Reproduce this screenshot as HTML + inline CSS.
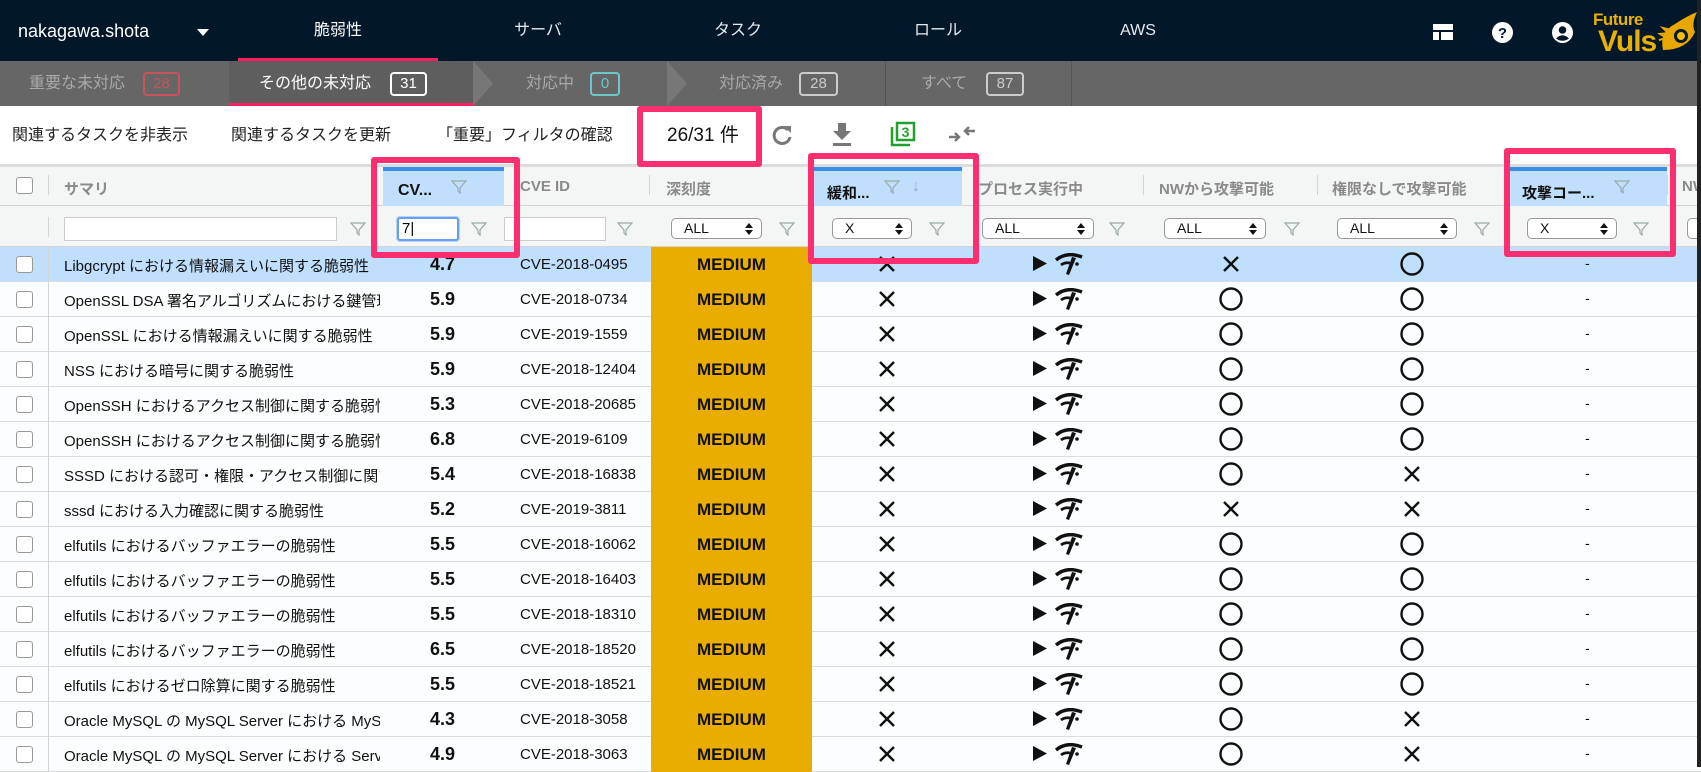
<!DOCTYPE html>
<html><head><meta charset="utf-8">
<style>
*{box-sizing:border-box;margin:0;padding:0}
body{width:1701px;height:767px;overflow:hidden;background:#fff;font-family:"Liberation Sans","Noto Sans CJK JP",sans-serif;position:relative}
.a{position:absolute}
.nav{left:0;top:0;width:1701px;height:61px;background:#03172a}
.nv{top:0;height:61px;line-height:61px;color:#e6e9ee;font-size:16px;width:200px;text-align:center}
.tabs{left:0;top:61px;width:1701px;height:45px;background:#666}
.tt{top:61px;height:45px;line-height:45px;font-size:16px;color:#a9a9a9;white-space:nowrap}
.bd{top:72px;height:24px;border:2px solid #ccc;border-radius:4px;font-size:15px;line-height:20px;text-align:center;color:#ccc}
.tb{top:121px;font-size:16px;color:#222;white-space:nowrap}
.hdr{left:0;top:164px;width:1701px;height:42px;background:#f4f5f5;border-top:3px solid #ddd;border-bottom:1px solid #d4d4d4}
.flt{left:0;top:206px;width:1701px;height:41px;background:#f4f5f5;border-bottom:1px solid #d4d4d4}
.ht{top:178px;font-size:15px;font-weight:bold;color:#8a8a8a;white-space:nowrap}
.sep{width:1px;background:#d4d4d4}
.hl{background:#c0dffc;border-top:4px solid #3a8ee6;top:167px;height:39px}
.sel{top:218px;height:21px;border:1px solid #999;border-radius:5px;background:#fff;font-size:14px;line-height:19px;padding-left:12px;color:#111}
.sel:after{content:"";position:absolute;right:8px;top:4px;border-left:4px solid transparent;border-right:4px solid transparent;border-bottom:5px solid #111}
.sel:before{content:"";position:absolute;right:8px;top:11px;border-left:4px solid transparent;border-right:4px solid transparent;border-top:5px solid #111}
.fn{width:16px;height:14px}
.row{left:0;width:1701px;height:35px;background:#fcfdfe;border-bottom:1px solid #d9dcdf}
.row>*{position:absolute}
.cb{left:16px;top:9px;width:17px;height:17px;border:1px solid #999;border-radius:3px;background:#fff}
.vs{left:48px;top:0;width:1px;height:35px;background:#d4d4d4}
.sm{left:64px;width:316px;top:8px;font-size:15px;color:#111;white-space:nowrap;overflow:hidden}
.cv{left:430px;top:7px;font-size:18px;font-weight:bold;color:#111}
.id{left:520px;top:9px;font-size:15px;color:#111}
.sv{left:651px;width:161px;top:0;height:35px;background:#e8ad00;text-align:center;line-height:35px;font-weight:bold;font-size:17px;color:#111}
.pk{border:6px solid #fb2f6f;border-radius:3px}
</style></head><body>
<div class="a nav"></div>
<div class="a" style="left:18px;top:0;line-height:63px;font-size:18px;color:#fff">nakagawa.shota</div>
<div class="a" style="left:197px;top:29px;border-left:6px solid transparent;border-right:6px solid transparent;border-top:7px solid #fff"></div>
<div class="a nv" style="left:238px;color:#fff">脆弱性</div>
<div class="a" style="left:238px;top:58px;width:200px;height:3px;background:#fb1f5f"></div>
<div class="a nv" style="left:438px">サーバ</div>
<div class="a nv" style="left:638px">タスク</div>
<div class="a nv" style="left:838px">ロール</div>
<div class="a nv" style="left:1038px">AWS</div>
<svg class="a" style="left:1433px;top:24px" width="20" height="16"><rect x="0" y="0" width="20" height="6" fill="#fff"/><rect x="0" y="8" width="6" height="8" fill="#fff"/><rect x="8" y="8" width="12" height="8" fill="#fff"/></svg>
<svg class="a" style="left:1492px;top:22px" width="21" height="21"><circle cx="10.5" cy="10.5" r="10.5" fill="#fff"/><text x="10.5" y="16" text-anchor="middle" font-size="15" font-weight="bold" fill="#03172a" font-family="Liberation Sans">?</text></svg>
<svg class="a" style="left:1552px;top:22px" width="21" height="21"><circle cx="10.5" cy="10.5" r="10.5" fill="#fff"/><circle cx="10.5" cy="8" r="3.8" fill="#03172a"/><path d="M4 16.5 Q10.5 10 17 16.5 Q10.5 21 4 16.5Z" fill="#03172a"/></svg>
<div class="a" style="left:1593px;top:10px;font:bold 17px 'Liberation Sans',sans-serif;color:#e8b000;letter-spacing:-0.5px">Future</div>
<div class="a" style="left:1598px;top:25px;font:bold 30px 'Liberation Sans',sans-serif;color:#e8b000;letter-spacing:-1px">Vuls</div>
<svg class="a" style="left:1657px;top:10px" width="42" height="46"><path d="M6 40 Q2 22 18 14 Q30 6 40 2 Q34 14 38 22 Q30 40 6 40Z" fill="#e8a800"/><path d="M2 30 L10 28 L3 24 L11 23 L6 18 L14 20" fill="none" stroke="#e8a800" stroke-width="2"/><circle cx="24" cy="26" r="7" fill="#03172a"/><circle cx="24" cy="26" r="4" fill="#f0c000"/></svg>

<div class="a tabs"></div>
<div class="a" style="left:229px;top:61px;width:244px;height:45px;background:#5e5e5e"></div>
<div class="a" style="left:229px;top:103px;width:244px;height:3px;background:#fb1f5f"></div>
<svg class="a" style="left:473px;top:61px" width="24" height="45"><path d="M0 0 L20 22.5 L0 45Z" fill="#777"/></svg>
<svg class="a" style="left:667px;top:61px" width="24" height="45"><path d="M0 0 L20 22.5 L0 45Z" fill="#777"/></svg>
<div class="a" style="left:885px;top:61px;width:1px;height:45px;background:#555"></div>
<div class="a" style="left:1071px;top:61px;width:1px;height:45px;background:#555"></div>
<div class="a tt" style="left:29px">重要な未対応</div>
<div class="a bd" style="left:143px;width:37px;border-color:#c8545a;color:#c8545a">28</div>
<div class="a tt" style="left:259px;color:#fff">その他の未対応</div>
<div class="a bd" style="left:390px;width:37px;border-color:#fff;color:#fff">31</div>
<div class="a tt" style="left:526px">対応中</div>
<div class="a bd" style="left:590px;width:30px;border-color:#6cc8c8;color:#6cc8c8">0</div>
<div class="a tt" style="left:719px">対応済み</div>
<div class="a bd" style="left:799px;width:39px">28</div>
<div class="a tt" style="left:921px">すべて</div>
<div class="a bd" style="left:986px;width:38px">87</div>

<div class="a tb" style="left:12px">関連するタスクを非表示</div>
<div class="a tb" style="left:231px">関連するタスクを更新</div>
<div class="a tb" style="left:437px">「重要」フィルタの確認</div>
<div class="a" style="left:667px;top:120px;font-size:19px;color:#111">26/31 件</div>
<svg class="a" style="left:771px;top:124px" width="22" height="22"><path d="M17 6 A8 8 0 1 0 19 13" fill="none" stroke="#777" stroke-width="3"/><path d="M13 2 L20 2 L20 9Z" fill="#777"/></svg>
<svg class="a" style="left:832px;top:123px" width="20" height="24"><path d="M6 0 H14 V8 H19 L10 17 L1 8 H6Z" fill="#777"/><rect x="1" y="20" width="18" height="3" fill="#777"/></svg>
<svg class="a" style="left:889px;top:121px" width="28" height="27"><rect x="8" y="2" width="17" height="17" fill="none" stroke="#22a02e" stroke-width="2.5"/><path d="M3 6 V24 H21" fill="none" stroke="#22a02e" stroke-width="2.5"/><text x="16.5" y="16" text-anchor="middle" font-size="14" font-weight="bold" fill="#22a02e" font-family="Liberation Sans">3</text></svg>
<svg class="a" style="left:949px;top:124px" width="26" height="20"><path d="M0 13 H9 M6 9 L10 13 L6 17" fill="none" stroke="#777" stroke-width="2.5"/><path d="M26 7 H17 M20 3 L16 7 L20 11" fill="none" stroke="#777" stroke-width="2.5"/></svg>

<div class="a hdr"></div>
<div class="a flt"></div>
<div class="a hl" style="left:383px;width:121px"></div>
<div class="a hl" style="left:812px;width:150px"></div>
<div class="a hl" style="left:1509px;width:158px"></div>
<div class="a" style="left:16px;top:177px;width:17px;height:17px;border:1px solid #999;border-radius:3px;background:#fff"></div>
<div class="a sep" style="left:48px;top:175px;height:20px"></div>
<div class="a ht" style="left:64px">サマリ</div>
<div class="a ht" style="left:398px;top:182px;color:#111;font-size:16px">CV...</div>
<div class="a ht" style="left:520px">CVE ID</div>
<div class="a sep" style="left:649px;top:175px;height:20px"></div>
<div class="a ht" style="left:666px">深刻度</div>
<div class="a ht" style="left:827px;top:182px;color:#111">緩和...</div>
<div class="a" style="left:912px;top:178px;color:#9ab;font-size:16px">↓</div>
<div class="a ht" style="left:978px">プロセス実行中</div>
<div class="a sep" style="left:1143px;top:175px;height:20px"></div>
<div class="a ht" style="left:1159px">NWから攻撃可能</div>
<div class="a sep" style="left:1317px;top:175px;height:20px"></div>
<div class="a ht" style="left:1332px">権限なしで攻撃可能</div>
<div class="a ht" style="left:1522px;top:182px;color:#111">攻撃コー...</div>
<div class="a sep" style="left:1667px;top:175px;height:20px"></div>
<div class="a ht" style="left:1682px">NW</div>
<svg class="a fn" style="left:451px;top:180px"><path d="M1 1 H15 L9 8 V13 L7 11 V8Z" fill="none" stroke="#9aa" stroke-width="1.2"/></svg>
<svg class="a fn" style="left:884px;top:180px"><path d="M1 1 H15 L9 8 V13 L7 11 V8Z" fill="none" stroke="#9aa" stroke-width="1.2"/></svg>
<svg class="a fn" style="left:1614px;top:180px"><path d="M1 1 H15 L9 8 V13 L7 11 V8Z" fill="none" stroke="#9aa" stroke-width="1.2"/></svg>
<div class="a sep" style="left:48px;top:217px;height:20px"></div>
<div class="a" style="left:64px;top:217px;width:273px;height:24px;background:#fff;border:1px solid #ccc"></div>
<div class="a" style="left:397px;top:217px;width:62px;height:24px;background:#fff;border:2px solid #6a9ff0;border-radius:3px;box-shadow:0 0 0 1px #b8d3fa;font-size:15px;padding-left:3px;line-height:20px">7|</div>
<div class="a" style="left:504px;top:217px;width:102px;height:24px;background:#fff;border:1px solid #ccc"></div>
<div class="a sel" style="left:671px;width:91px">ALL</div>
<div class="a sel" style="left:832px;width:80px">X</div>
<div class="a sel" style="left:982px;width:112px">ALL</div>
<div class="a sel" style="left:1164px;width:102px">ALL</div>
<div class="a sel" style="left:1337px;width:120px">ALL</div>
<div class="a sel" style="left:1527px;width:90px">X</div>
<div class="a sel" style="left:1687px;width:40px"></div>
<svg class="a fn" style="left:350px;top:222px"><path d="M1 1 H15 L9 8 V13 L7 11 V8Z" fill="none" stroke="#9aa" stroke-width="1.2"/></svg>
<svg class="a fn" style="left:471px;top:222px"><path d="M1 1 H15 L9 8 V13 L7 11 V8Z" fill="none" stroke="#9aa" stroke-width="1.2"/></svg>
<svg class="a fn" style="left:617px;top:222px"><path d="M1 1 H15 L9 8 V13 L7 11 V8Z" fill="none" stroke="#9aa" stroke-width="1.2"/></svg>
<svg class="a fn" style="left:779px;top:222px"><path d="M1 1 H15 L9 8 V13 L7 11 V8Z" fill="none" stroke="#9aa" stroke-width="1.2"/></svg>
<svg class="a fn" style="left:929px;top:222px"><path d="M1 1 H15 L9 8 V13 L7 11 V8Z" fill="none" stroke="#9aa" stroke-width="1.2"/></svg>
<svg class="a fn" style="left:1109px;top:222px"><path d="M1 1 H15 L9 8 V13 L7 11 V8Z" fill="none" stroke="#9aa" stroke-width="1.2"/></svg>
<svg class="a fn" style="left:1284px;top:222px"><path d="M1 1 H15 L9 8 V13 L7 11 V8Z" fill="none" stroke="#9aa" stroke-width="1.2"/></svg>
<svg class="a fn" style="left:1474px;top:222px"><path d="M1 1 H15 L9 8 V13 L7 11 V8Z" fill="none" stroke="#9aa" stroke-width="1.2"/></svg>
<svg class="a fn" style="left:1633px;top:222px"><path d="M1 1 H15 L9 8 V13 L7 11 V8Z" fill="none" stroke="#9aa" stroke-width="1.2"/></svg>

<svg width="0" height="0" style="position:absolute">
<defs>
<g id="X"><path d="M2 2 L16 16 M16 2 L2 16" stroke="#111" stroke-width="2.4"/></g>
<g id="O"><circle cx="12" cy="12" r="10.5" fill="none" stroke="#111" stroke-width="2.4"/></g>
<g id="P"><path d="M8 3 L22 10.5 L8 18Z" fill="#111"/><g transform="translate(30,0)"><path d="M1 7 Q12 -2 27 4" fill="none" stroke="#111" stroke-width="3.4"/><path d="M6 12 Q10 9 15 10" fill="none" stroke="#111" stroke-width="2.8"/><path d="M17 4 L21 5 L14 22 L11 21Z" fill="#111"/><circle cx="22" cy="11" r="1.8" fill="#111"/></g></g>
</defs></svg>

<div class="a row" style="top:247px;background:#c0dffc"><span class="cb"></span><span class="vs"></span><span class="sm">Libgcrypt における情報漏えいに関する脆弱性</span><span class="cv">4.7</span><span class="id">CVE-2018-0495</span><span class="sv">MEDIUM</span><svg style="left:878px;top:8px" width="18" height="18"><use href="#X"/></svg><svg style="left:1025px;top:6px" width="60" height="24"><use href="#P"/></svg><svg style="left:1222px;top:8px" width="18" height="18"><use href="#X"/></svg><svg style="left:1400px;top:5px" width="24" height="24"><use href="#O"/></svg><span style="left:1585px;top:8px;font-size:14px">-</span></div>
<div class="a row" style="top:282px"><span class="cb"></span><span class="vs"></span><span class="sm">OpenSSL DSA 署名アルゴリズムにおける鍵管理に関する脆弱性</span><span class="cv">5.9</span><span class="id">CVE-2018-0734</span><span class="sv">MEDIUM</span><svg style="left:878px;top:8px" width="18" height="18"><use href="#X"/></svg><svg style="left:1025px;top:6px" width="60" height="24"><use href="#P"/></svg><svg style="left:1219px;top:5px" width="24" height="24"><use href="#O"/></svg><svg style="left:1400px;top:5px" width="24" height="24"><use href="#O"/></svg><span style="left:1585px;top:8px;font-size:14px">-</span></div>
<div class="a row" style="top:317px"><span class="cb"></span><span class="vs"></span><span class="sm">OpenSSL における情報漏えいに関する脆弱性</span><span class="cv">5.9</span><span class="id">CVE-2019-1559</span><span class="sv">MEDIUM</span><svg style="left:878px;top:8px" width="18" height="18"><use href="#X"/></svg><svg style="left:1025px;top:6px" width="60" height="24"><use href="#P"/></svg><svg style="left:1219px;top:5px" width="24" height="24"><use href="#O"/></svg><svg style="left:1400px;top:5px" width="24" height="24"><use href="#O"/></svg><span style="left:1585px;top:8px;font-size:14px">-</span></div>
<div class="a row" style="top:352px"><span class="cb"></span><span class="vs"></span><span class="sm">NSS における暗号に関する脆弱性</span><span class="cv">5.9</span><span class="id">CVE-2018-12404</span><span class="sv">MEDIUM</span><svg style="left:878px;top:8px" width="18" height="18"><use href="#X"/></svg><svg style="left:1025px;top:6px" width="60" height="24"><use href="#P"/></svg><svg style="left:1219px;top:5px" width="24" height="24"><use href="#O"/></svg><svg style="left:1400px;top:5px" width="24" height="24"><use href="#O"/></svg><span style="left:1585px;top:8px;font-size:14px">-</span></div>
<div class="a row" style="top:387px"><span class="cb"></span><span class="vs"></span><span class="sm">OpenSSH におけるアクセス制御に関する脆弱性</span><span class="cv">5.3</span><span class="id">CVE-2018-20685</span><span class="sv">MEDIUM</span><svg style="left:878px;top:8px" width="18" height="18"><use href="#X"/></svg><svg style="left:1025px;top:6px" width="60" height="24"><use href="#P"/></svg><svg style="left:1219px;top:5px" width="24" height="24"><use href="#O"/></svg><svg style="left:1400px;top:5px" width="24" height="24"><use href="#O"/></svg><span style="left:1585px;top:8px;font-size:14px">-</span></div>
<div class="a row" style="top:422px"><span class="cb"></span><span class="vs"></span><span class="sm">OpenSSH におけるアクセス制御に関する脆弱性</span><span class="cv">6.8</span><span class="id">CVE-2019-6109</span><span class="sv">MEDIUM</span><svg style="left:878px;top:8px" width="18" height="18"><use href="#X"/></svg><svg style="left:1025px;top:6px" width="60" height="24"><use href="#P"/></svg><svg style="left:1219px;top:5px" width="24" height="24"><use href="#O"/></svg><svg style="left:1400px;top:5px" width="24" height="24"><use href="#O"/></svg><span style="left:1585px;top:8px;font-size:14px">-</span></div>
<div class="a row" style="top:457px"><span class="cb"></span><span class="vs"></span><span class="sm">SSSD における認可・権限・アクセス制御に関する脆弱性</span><span class="cv">5.4</span><span class="id">CVE-2018-16838</span><span class="sv">MEDIUM</span><svg style="left:878px;top:8px" width="18" height="18"><use href="#X"/></svg><svg style="left:1025px;top:6px" width="60" height="24"><use href="#P"/></svg><svg style="left:1219px;top:5px" width="24" height="24"><use href="#O"/></svg><svg style="left:1403px;top:8px" width="18" height="18"><use href="#X"/></svg><span style="left:1585px;top:8px;font-size:14px">-</span></div>
<div class="a row" style="top:492px"><span class="cb"></span><span class="vs"></span><span class="sm">sssd における入力確認に関する脆弱性</span><span class="cv">5.2</span><span class="id">CVE-2019-3811</span><span class="sv">MEDIUM</span><svg style="left:878px;top:8px" width="18" height="18"><use href="#X"/></svg><svg style="left:1025px;top:6px" width="60" height="24"><use href="#P"/></svg><svg style="left:1222px;top:8px" width="18" height="18"><use href="#X"/></svg><svg style="left:1403px;top:8px" width="18" height="18"><use href="#X"/></svg><span style="left:1585px;top:8px;font-size:14px">-</span></div>
<div class="a row" style="top:527px"><span class="cb"></span><span class="vs"></span><span class="sm">elfutils におけるバッファエラーの脆弱性</span><span class="cv">5.5</span><span class="id">CVE-2018-16062</span><span class="sv">MEDIUM</span><svg style="left:878px;top:8px" width="18" height="18"><use href="#X"/></svg><svg style="left:1025px;top:6px" width="60" height="24"><use href="#P"/></svg><svg style="left:1219px;top:5px" width="24" height="24"><use href="#O"/></svg><svg style="left:1400px;top:5px" width="24" height="24"><use href="#O"/></svg><span style="left:1585px;top:8px;font-size:14px">-</span></div>
<div class="a row" style="top:562px"><span class="cb"></span><span class="vs"></span><span class="sm">elfutils におけるバッファエラーの脆弱性</span><span class="cv">5.5</span><span class="id">CVE-2018-16403</span><span class="sv">MEDIUM</span><svg style="left:878px;top:8px" width="18" height="18"><use href="#X"/></svg><svg style="left:1025px;top:6px" width="60" height="24"><use href="#P"/></svg><svg style="left:1219px;top:5px" width="24" height="24"><use href="#O"/></svg><svg style="left:1400px;top:5px" width="24" height="24"><use href="#O"/></svg><span style="left:1585px;top:8px;font-size:14px">-</span></div>
<div class="a row" style="top:597px"><span class="cb"></span><span class="vs"></span><span class="sm">elfutils におけるバッファエラーの脆弱性</span><span class="cv">5.5</span><span class="id">CVE-2018-18310</span><span class="sv">MEDIUM</span><svg style="left:878px;top:8px" width="18" height="18"><use href="#X"/></svg><svg style="left:1025px;top:6px" width="60" height="24"><use href="#P"/></svg><svg style="left:1219px;top:5px" width="24" height="24"><use href="#O"/></svg><svg style="left:1400px;top:5px" width="24" height="24"><use href="#O"/></svg><span style="left:1585px;top:8px;font-size:14px">-</span></div>
<div class="a row" style="top:632px"><span class="cb"></span><span class="vs"></span><span class="sm">elfutils におけるバッファエラーの脆弱性</span><span class="cv">6.5</span><span class="id">CVE-2018-18520</span><span class="sv">MEDIUM</span><svg style="left:878px;top:8px" width="18" height="18"><use href="#X"/></svg><svg style="left:1025px;top:6px" width="60" height="24"><use href="#P"/></svg><svg style="left:1219px;top:5px" width="24" height="24"><use href="#O"/></svg><svg style="left:1400px;top:5px" width="24" height="24"><use href="#O"/></svg><span style="left:1585px;top:8px;font-size:14px">-</span></div>
<div class="a row" style="top:667px"><span class="cb"></span><span class="vs"></span><span class="sm">elfutils におけるゼロ除算に関する脆弱性</span><span class="cv">5.5</span><span class="id">CVE-2018-18521</span><span class="sv">MEDIUM</span><svg style="left:878px;top:8px" width="18" height="18"><use href="#X"/></svg><svg style="left:1025px;top:6px" width="60" height="24"><use href="#P"/></svg><svg style="left:1219px;top:5px" width="24" height="24"><use href="#O"/></svg><svg style="left:1400px;top:5px" width="24" height="24"><use href="#O"/></svg><span style="left:1585px;top:8px;font-size:14px">-</span></div>
<div class="a row" style="top:702px"><span class="cb"></span><span class="vs"></span><span class="sm">Oracle MySQL の MySQL Server における MySQL</span><span class="cv">4.3</span><span class="id">CVE-2018-3058</span><span class="sv">MEDIUM</span><svg style="left:878px;top:8px" width="18" height="18"><use href="#X"/></svg><svg style="left:1025px;top:6px" width="60" height="24"><use href="#P"/></svg><svg style="left:1219px;top:5px" width="24" height="24"><use href="#O"/></svg><svg style="left:1403px;top:8px" width="18" height="18"><use href="#X"/></svg><span style="left:1585px;top:8px;font-size:14px">-</span></div>
<div class="a row" style="top:737px"><span class="cb"></span><span class="vs"></span><span class="sm">Oracle MySQL の MySQL Server における Server</span><span class="cv">4.9</span><span class="id">CVE-2018-3063</span><span class="sv">MEDIUM</span><svg style="left:878px;top:8px" width="18" height="18"><use href="#X"/></svg><svg style="left:1025px;top:6px" width="60" height="24"><use href="#P"/></svg><svg style="left:1219px;top:5px" width="24" height="24"><use href="#O"/></svg><svg style="left:1403px;top:8px" width="18" height="18"><use href="#X"/></svg><span style="left:1585px;top:8px;font-size:14px">-</span></div>
<div class="a" style="left:1697px;top:0;width:4px;height:767px;background:#222"></div>

<div class="a pk" style="left:637px;top:106px;width:125px;height:61px"></div>
<div class="a pk" style="left:371px;top:157px;width:149px;height:101px"></div>
<div class="a pk" style="left:808px;top:153px;width:171px;height:111px"></div>
<div class="a pk" style="left:1504px;top:148px;width:172px;height:109px"></div>
</body></html>
